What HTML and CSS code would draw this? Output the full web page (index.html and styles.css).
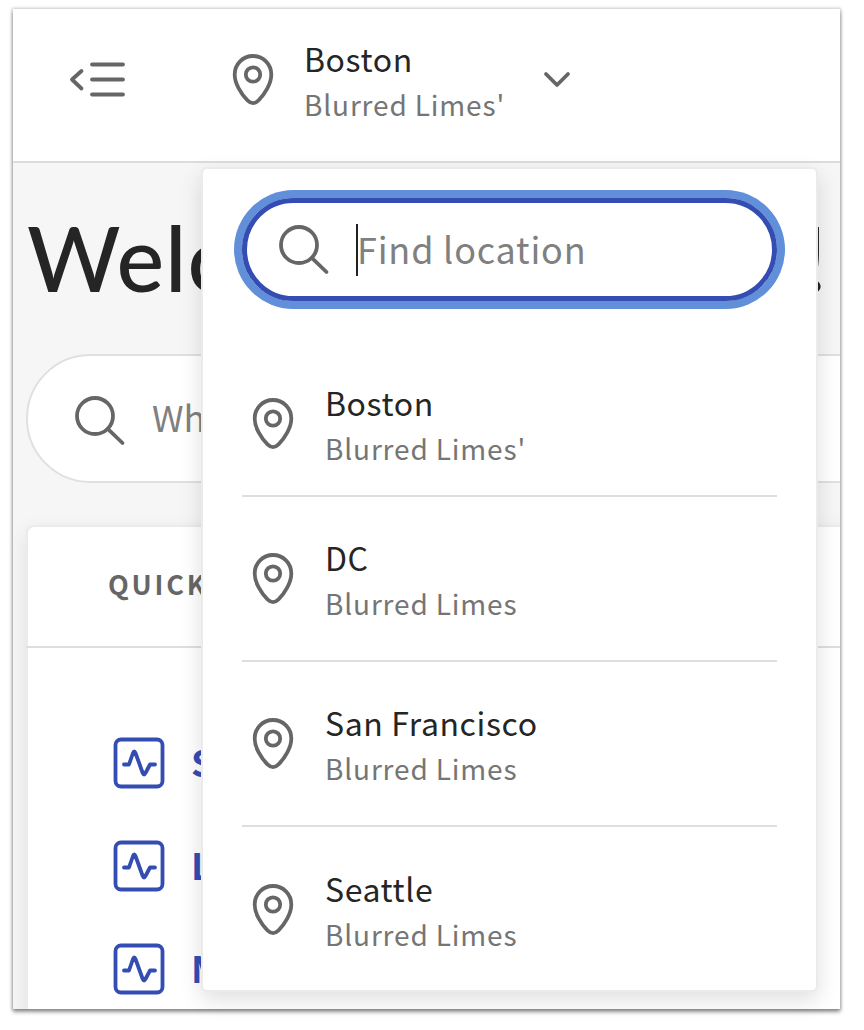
FILE: index.html
```html
<!DOCTYPE html>
<html lang="en">
<head>
  <meta charset="UTF-8">
  <meta name="viewport" content="width=device-width, initial-scale=1.0">
  <title>Find location</title>
  <link rel="stylesheet" href="styles.css">
</head>
<body>

  <!-- Shared icons -->
  <svg class="sprite" width="0" height="0">
    <symbol id="pin" viewBox="0 0 42 52">
      <path d="M21 2C10.800 2 2.700 10 2.700 20.500C2.700 29.500 9 40 15.500 46.300C19.500 50.200 22.500 50.200 26.500 46.300C33 40 39.300 29.500 39.300 20.500C39.300 10 31.200 2 21 2Z"/>
      <circle cx="21" cy="20.500" r="7.200"/>
    </symbol>
    <symbol id="search" viewBox="0 0 52 52">
      <circle cx="21" cy="21" r="18"/>
      <path d="M33.800 33.800L48.500 48"/>
    </symbol>
    <symbol id="activity" viewBox="0 0 52 52">
      <rect x="2.500" y="2.500" width="47" height="47" rx="5.500"/>
      <path d="M11 27.500H16L20 16Q21.200 13 22.500 16L29.700 36Q31 39 32.500 36L37 27.500H42"/>
    </symbol>
  </svg>

  <div class="window">
    <header class="header">
      <svg class="menu-icon" viewBox="0 0 58 38">
        <path d="M12.500 11L3 19.500L12.500 28.500"/>
        <path d="M23 4.500H54M23 19.500H54M23 34.500H54"/>
      </svg>
      <div class="location">
        <svg class="pin"><use href="#pin"/></svg>
        <div class="location-text">
          <div class="name">Boston</div>
          <div class="company">Blurred Limes'</div>
        </div>
      </div>
      <svg class="chevron" viewBox="0 0 28 18"><path d="M3 3L14 14L25 3"/></svg>
    </header>

    <main class="main">
      <h1 class="welcome"><span>Welcome</span><span>!</span></h1>

      <div class="main-search">
        <svg class="search-icon"><use href="#search"/></svg>
        <span>What</span>
      </div>

      <section class="card">
        <h2 class="card-title">QUICK LINKS</h2>
        <ul class="links">
          <li><svg class="activity"><use href="#activity"/></svg><span>S</span></li>
          <li><svg class="activity"><use href="#activity"/></svg><span>L</span></li>
          <li><svg class="activity"><use href="#activity"/></svg><span>M</span></li>
        </ul>
      </section>
    </main>

    <!-- Location dropdown -->
    <div class="dropdown">
      <div class="find">
        <svg class="search-icon"><use href="#search"/></svg>
        <span class="caret"></span>
        <span class="placeholder">Find location</span>
      </div>
      <ul class="locations">
        <li class="location">
          <svg class="pin"><use href="#pin"/></svg>
          <div class="location-text">
            <div class="name">Boston</div>
            <div class="company">Blurred Limes'</div>
          </div>
        </li>
        <li class="location">
          <svg class="pin"><use href="#pin"/></svg>
          <div class="location-text">
            <div class="name">DC</div>
            <div class="company">Blurred Limes</div>
          </div>
        </li>
        <li class="location">
          <svg class="pin"><use href="#pin"/></svg>
          <div class="location-text">
            <div class="name">San Francisco</div>
            <div class="company">Blurred Limes</div>
          </div>
        </li>
        <li class="location">
          <svg class="pin"><use href="#pin"/></svg>
          <div class="location-text">
            <div class="name">Seattle</div>
            <div class="company">Blurred Limes</div>
          </div>
        </li>
      </ul>
    </div>
  </div>

</body>
</html>
```
FILE: styles.css
```css
* {
  box-sizing: border-box;
}

body {
  margin: 0;
  padding: 9px 24px 0 13px;
  height: 1030px;
  overflow: hidden;
  background: #fff;
  color: #252525;
  font-family: "Noto Sans CJK SC", "Noto Sans", sans-serif;
}

ul {
  list-style: none;
  margin: 0;
  padding: 0;
}

svg {
  display: block;
  flex: none;
  fill: none;
  stroke: #666;
  stroke-width: 3.8;
  stroke-linecap: round;
  stroke-linejoin: round;
}

.sprite {
  position: absolute;
}

.window {
  position: relative;
  width: 827px;
  height: 1000px;
  background: #f6f6f6;
  box-shadow: 0 0 3px 1px rgba(0, 0, 0, 0.2), 0 3px 4px rgba(0, 0, 0, 0.4);
}

/* Header */
.header {
  display: flex;
  align-items: flex-start;
  height: 154px;
  padding: 27px 0 0 56px;
  background: #fff;
  border-bottom: 2px solid #dcdcdc;
}

.menu-icon {
  width: 58px;
  height: 38px;
  margin: 24px 105px 0 0;
}

.chevron {
  width: 28px;
  height: 18px;
  margin: 35px 0 0 38px;
}

.location {
  display: flex;
  align-items: flex-start;
}

.pin {
  width: 42px;
  height: 52px;
  margin-top: 18px;
}

.location-text {
  margin-left: 30px;
}

.name {
  font-size: 32px;
  line-height: 44px;
  letter-spacing: 0.6px;
}

.company {
  font-size: 28px;
  line-height: 48px;
  letter-spacing: 0.85px;
  color: #757575;
}

/* Page behind the dropdown */
.main {
  height: 846px;
  padding: 40px 0 0 13px;
  overflow: hidden;
}

.welcome {
  display: flex;
  justify-content: space-between;
  height: 108px;
  margin: 0 12px 43px 1px;
  font-family: Lato, sans-serif;
  font-size: 90px;
  font-weight: 500;
  line-height: 108px;
  letter-spacing: 1px;
}

.search-icon {
  width: 52px;
  height: 52px;
}

.main-search {
  display: flex;
  align-items: center;
  width: 900px;
  height: 129px;
  padding-left: 46px;
  background: #fff;
  border: 2px solid #e0e0e0;
  border-radius: 65px;
  font-size: 36px;
  color: #808080;
}

.main-search .search-icon {
  margin-top: 4px;
}

.main-search span {
  margin: 0 0 5px 26px;
}

.card {
  width: 900px;
  height: 600px;
  margin-top: 42px;
  background: #fff;
  border: 2px solid #ebebeb;
  border-radius: 8px;
  box-shadow: 0 6px 20px rgba(0, 0, 0, 0.09);
}

.card-title {
  height: 121px;
  margin: 0 0 0 -2px;
  padding-left: 82px;
  border-bottom: 2px solid #dedede;
  font-size: 27px;
  font-weight: 700;
  line-height: 114px;
  letter-spacing: 2.8px;
  color: #666;
}

.links {
  display: grid;
  gap: 51px;
  padding: 89px 0 0 85px;
}

.links li {
  display: flex;
  align-items: center;
  height: 52px;
  font-size: 37px;
  font-weight: 700;
  color: #334db3;
}

.links span {
  margin: 0 0 5px 26px;
}

.activity {
  width: 52px;
  height: 52px;
  stroke: #334db3;
}

/* Dropdown */
.dropdown {
  position: absolute;
  top: 158px;
  left: 188px;
  width: 617px;
  height: 825px;
  padding: 29px 39px 0;
  background: #fff;
  background-clip: padding-box;
  border: 2px solid #ebebeb;
  border-radius: 6px;
  box-shadow: 0 8px 22px rgba(0, 0, 0, 0.13);
}

.find {
  display: flex;
  align-items: center;
  height: 103px;
  padding-left: 31px;
  border: 5px solid #334db3;
  border-radius: 52px;
  box-shadow: 0 0 0 8px #628fd9;
  font-size: 36px;
  letter-spacing: 0.8px;
  color: #808080;
}

.caret {
  width: 2px;
  height: 52px;
  margin-left: 26px;
  background: #222;
}

.placeholder {
  margin: 0 0 4px -1px;
}

.locations {
  padding-top: 79px;
}

.locations .location {
  height: 165px;
  padding: 38px 0 0 10px;
  border-bottom: 2px solid #dedede;
}

.locations .location-text {
  margin-left: 31px;
}

.locations .location:first-child {
  height: 117px;
  padding-top: 0;
}

.locations .location:last-child {
  padding-top: 39px;
  border-bottom: 0;
}
```
